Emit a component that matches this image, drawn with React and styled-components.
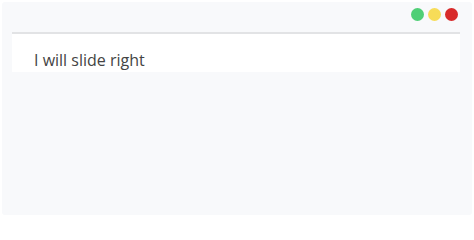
import React from 'react';
import styled, { createGlobalStyle } from 'styled-components';

const GlobalStyle = createGlobalStyle`
  html, body {
    margin: 0;
    padding: 0;
    background: #ffffff;
    font-family: "Open Sans", "Liberation Sans", sans-serif;
  }
`;

const Window = styled.div`
  box-sizing: border-box;
  width: 470px;
  height: 213px;
  margin: 2px;
  background: #f8f9fb;
  border-radius: 3px;
  display: flex;
  flex-direction: column;
`;

const TitleBar = styled.div`
  display: flex;
  justify-content: flex-end;
  align-items: center;
  gap: 4px;
  height: 24px;
  padding: 0 14px 0 0;
`;

const Dot = styled.span`
  width: 13px;
  height: 13px;
  border-radius: 50%;
  background: ${(p) => p.color};
`;

const Content = styled.div`
  margin: 6px 12px 0 10px;
  background: #ffffff;
  border-top: 2px solid #e2e3e5;
  height: 38px;
  padding: 0 0 0 22px;
  display: flex;
  align-items: flex-end;
`;

const Label = styled.p`
  margin: 0 0 1px;
  font-size: 16px;
  color: #444444;
  line-height: 22px;
`;

export default function App() {
  return (
    <>
      <GlobalStyle />
      <Window>
        <TitleBar>
          <Dot color="#4fcf76" />
          <Dot color="#f7dc58" />
          <Dot color="#d82a2a" />
        </TitleBar>
        <Content>
          <Label>I will slide right</Label>
        </Content>
      </Window>
    </>
  );
}
